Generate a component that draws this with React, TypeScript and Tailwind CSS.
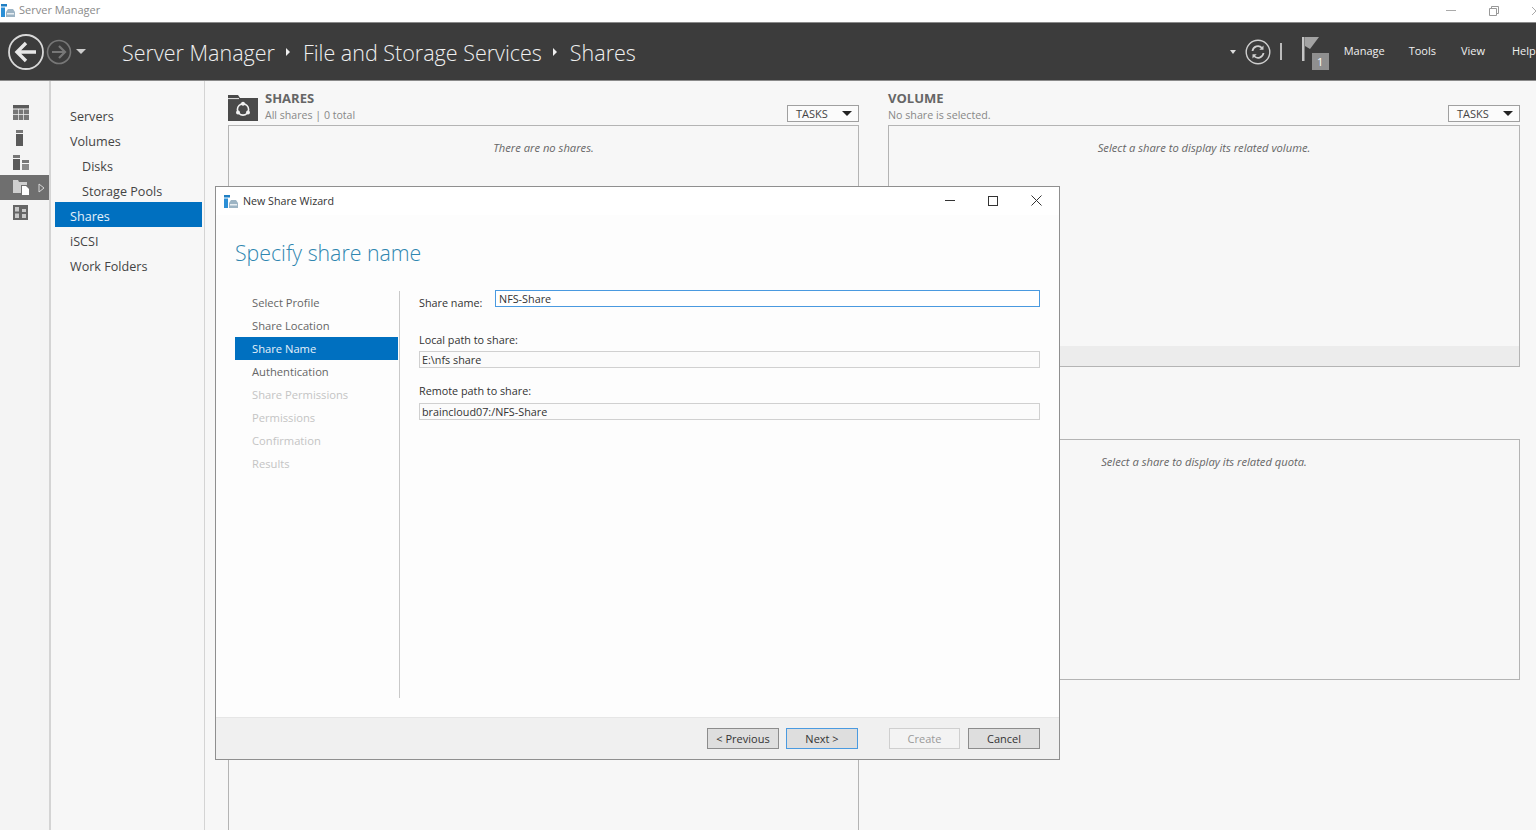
const font = "font-['Open_Sans','Noto_Sans',sans-serif]";

function AppIcon() {
  return (
    <svg width="15" height="15" viewBox="0 0 15 15">
      <rect x="0" y="1" width="6" height="2.5" fill="#1f7fc4" />
      <rect x="0" y="4.5" width="4" height="9.5" fill="#2b8fd6" />
      <path d="M5 9l2-3h5l2 3v5H5z" fill="#9db4c4" />
      <rect x="6" y="10" width="7" height="1.5" fill="#e8eef2" />
    </svg>
  );
}

function BackButton() {
  return (
    <svg width="38" height="38" viewBox="0 0 38 38">
      <circle cx="19" cy="19" r="17" fill="none" stroke="#d8d8d8" strokeWidth="1.8" />
      <path d="M29 19H11M19 10l-9 9 9 9" fill="none" stroke="#e8e8e8" strokeWidth="3.4" />
    </svg>
  );
}

function ForwardButton() {
  return (
    <svg width="26" height="26" viewBox="0 0 26 26">
      <circle cx="13" cy="13" r="11.5" fill="none" stroke="#777" strokeWidth="1.6" />
      <path d="M6 13h13M13 7l6 6-6 6" fill="none" stroke="#777" strokeWidth="2.2" />
    </svg>
  );
}

function RefreshIcon() {
  return (
    <svg width="26" height="26" viewBox="0 0 26 26">
      <circle cx="13" cy="13" r="11.8" fill="none" stroke="#cfcfcf" strokeWidth="1.4" />
      <path d="M7.5 12a5.5 5.5 0 0 1 9.5-3M18.5 14a5.5 5.5 0 0 1-9.5 3" fill="none" stroke="#cfcfcf" strokeWidth="1.8" />
      <path d="M18.5 6.5v4.2h-4.2zM7.5 19.5v-4.2h4.2z" fill="#cfcfcf" />
    </svg>
  );
}

function FlagIcon() {
  return (
    <div className="relative w-[27px] h-[33px]">
      <svg width="18" height="24" viewBox="0 0 18 24">
        <rect x="0" y="0" width="2.5" height="24" fill="#c4c4c4" />
        <path d="M3 0h14L8 12 3 9z" fill="#a3a3a3" />
      </svg>
      <div className="absolute right-0 bottom-0 w-[17px] h-[17px] bg-[#8f8f8f] text-white text-[11px] leading-[17px] text-center">1</div>
    </div>
  );
}

function RailIcon({ kind }: { kind: number }) {
  const c = kind === 3 ? '#e6e6e6' : '#5a5a5a';
  if (kind === 0)
    return (
      <svg width="16" height="15" viewBox="0 0 16 15">
        <path d="M0 0h16v3.5H0z" fill={c} />
        <path d="M0 4.5h5v4.5H0zM5.7 4.5h4.6v4.5H5.7zM11 4.5h5v4.5h-5zM0 9.8h5V15H0zM5.7 9.8h4.6V15H5.7zM11 9.8h5V15h-5z" fill="#777" />
      </svg>
    );
  if (kind === 1)
    return (
      <svg width="7" height="16" viewBox="0 0 7 16" className="ml-[3px]">
        <rect width="7" height="3" fill="#777" />
        <rect y="4" width="7" height="12" fill={c} />
      </svg>
    );
  if (kind === 2)
    return (
      <svg width="16" height="15" viewBox="0 0 16 15">
        <rect width="7" height="3" fill="#777" />
        <rect y="4" width="7" height="11" fill={c} />
        <rect x="9" y="5" width="7" height="3" fill="#777" />
        <rect x="9" y="9" width="7" height="6" fill="#8a8a8a" />
      </svg>
    );
  if (kind === 3)
    return (
      <svg width="16" height="15" viewBox="0 0 16 15">
        <path d="M0 0h5l1 2h8v3H8v8H0z" fill="#cfcfcf" />
        <path d="M9 6h4l3 3v6H9z" fill="#fff" />
      </svg>
    );
  return (
    <svg width="15" height="15" viewBox="0 0 15 15">
      <path d="M0 0h15v15H0z" fill="#666" />
      <path d="M2 2h4v4.5H2zM9 4h4v3H9zM2 8.5h4V13H2zM9 9h4v4H9z" fill="#c8c8c8" />
    </svg>
  );
}

function SharesIcon() {
  return (
    <svg width="30" height="26" viewBox="0 0 30 26">
      <path d="M0 0h10l2 3h18v23H0z" fill="#4a4a4a" />
      <path d="M0 3.6h11" stroke="#f7f7f7" strokeWidth="0.9" />
      <circle cx="15" cy="14.5" r="5.6" fill="none" stroke="#f2f2f2" strokeWidth="1.6" />
      <circle cx="15" cy="8.8" r="2" fill="#f2f2f2" />
      <circle cx="10" cy="17.5" r="2" fill="#f2f2f2" />
      <circle cx="20" cy="17.5" r="2" fill="#f2f2f2" />
    </svg>
  );
}

function TasksButton() {
  return (
    <div className="w-[72px] h-[17px] border border-[#a0a0a0] bg-[#fbfbfb] flex items-center pl-[8px] pr-[6px] justify-between text-[11px] text-[#444]">
      <span className="pt-[2px]">TASKS</span>
      <span className="w-0 h-0 border-x-[5px] border-x-transparent border-t-[5px] border-t-[#222]" />
    </div>
  );
}

function EmptyText({ children }: { children: string }) {
  return <p className="pt-[13px] text-center italic text-[11.2px] leading-[18px] text-[#666]">{children}</p>;
}

function WizardButton({ label, variant, width }: { label: string; variant?: 'focus' | 'disabled'; width?: string }) {
  const look =
    variant === 'focus'
      ? 'border-[#4a9ae0] bg-[#dedede] text-[#333]'
      : variant === 'disabled'
        ? 'border-[#cfcfcf] bg-[#f3f3f3] text-[#9a9a9a]'
        : 'border-[#8c8c8c] bg-[#dedede] text-[#333]';
  return (
    <div className={`${width ?? 'w-[72px]'} h-[21px] pt-[2px] border flex items-center justify-center text-[11px] ${look}`}>{label}</div>
  );
}

const navItems = [
  { label: 'Servers' },
  { label: 'Volumes' },
  { label: 'Disks', sub: true },
  { label: 'Storage Pools', sub: true },
  { label: 'Shares', active: true },
  { label: 'iSCSI' },
  { label: 'Work Folders' },
];

const steps = [
  { label: 'Select Profile', tone: 'text-[#666]' },
  { label: 'Share Location', tone: 'text-[#666]' },
  { label: 'Share Name', tone: 'text-[#e6f1fa] bg-[#0070c0]' },
  { label: 'Authentication', tone: 'text-[#666]' },
  { label: 'Share Permissions', tone: 'text-[#c4c4c4]' },
  { label: 'Permissions', tone: 'text-[#c4c4c4]' },
  { label: 'Confirmation', tone: 'text-[#c4c4c4]' },
  { label: 'Results', tone: 'text-[#c4c4c4]' },
];

function Wizard() {
  return (
    <div className="absolute left-[215px] top-[186px] w-[845px] h-[574px] border border-[#8f8f8f] bg-[#fdfdfd] flex flex-col">
      <div className="h-[28px] shrink-0 bg-white flex items-center pl-[8px] text-[10.7px] text-[#333]">
        <AppIcon />
        <span className="ml-[4px]">New Share Wizard</span>
        <div className="ml-auto flex items-center mb-[1px]">
          <div className="w-[10px] h-[1px] bg-[#333] mr-[33px]" />
          <div className="w-[10px] h-[10px] border border-[#333] mr-[33px]" />
          <svg width="11" height="11" viewBox="0 0 11 11" className="mr-[17px]">
            <path d="M.5.5l10 10M10.5.5l-10 10" stroke="#333" strokeWidth="1" />
          </svg>
        </div>
      </div>
      <h1 className="h-[76px] shrink-0 pl-[19px] pt-[20px] text-[21.3px] leading-[36px] font-light text-[#2f86b0]">Specify share name</h1>
      <div className="flex-1 flex pl-[19px] pb-[19px]">
        <div className="w-[164px] pr-[1px]">
          {steps.map((s) => (
            <div key={s.label} className={`h-[23px] pl-[17px] pt-[2px] flex items-center text-[11.2px] ${s.tone}`}>
              {s.label}
            </div>
          ))}
        </div>
        <div className="w-px bg-[#c9c9c9]" />
        <div className="flex-1 pl-[19px] pr-[19px] text-[10.8px] text-[#333]">
          <div className="flex h-[17px] mt-[-1px]">
            <span className="w-[76px] pt-[4px] leading-[17px]">Share name:</span>
            <div className="flex-1 border border-[#4a9ae0] bg-white pl-[3px] leading-[15px]">NFS-Share</div>
          </div>
          <p className="mt-[25px] leading-[16px]">Local path to share:</p>
          <div className="mt-[3px] h-[17px] border border-[#d0d0d0] bg-[#fbfbfb] pl-[2px] leading-[16px]">E:\nfs share</div>
          <p className="mt-[15px] leading-[16px]">Remote path to share:</p>
          <div className="mt-[4px] h-[17px] border border-[#d0d0d0] bg-[#fbfbfb] pl-[2px] leading-[16px]">braincloud07:/NFS-Share</div>
        </div>
      </div>
      <div className="h-[42px] shrink-0 bg-[#f0f0f0] border-t border-[#e6e6e6] flex items-center pr-[19px] justify-end">
        <WizardButton label="< Previous" />
        <div className="ml-[7px]"><WizardButton label="Next >" variant="focus" /></div>
        <div className="ml-[31px]"><WizardButton label="Create" variant="disabled" width="w-[71px]" /></div>
        <div className="ml-[8px]"><WizardButton label="Cancel" /></div>
      </div>
    </div>
  );
}

export default function App() {
  return (
    <div className={`relative h-[830px] w-[1536px] overflow-hidden bg-[#f7f7f7] flex flex-col ${font}`}>
      {/* window title */}
      <div className="h-[22px] shrink-0 bg-white flex items-center pl-[1px] pb-[1px] text-[11px] text-[#8a8a8a]">
        <AppIcon />
        <span className="ml-[3px]">Server Manager</span>
        <div className="ml-auto flex items-center">
          <div className="w-[10px] h-px bg-[#aaa] mr-[33px]" />
          <svg width="10" height="10" viewBox="0 0 10 10" className="mr-[33px]">
            <path d="M.5 2.5h7v7h-7zM2.5 2.5v-2h7v7h-2" fill="none" stroke="#999" />
          </svg>
          <svg width="4" height="10" viewBox="0 0 4 10">
            <path d="M0 1l8 8M8 1L0 9" stroke="#aaa" />
          </svg>
        </div>
      </div>

      {/* breadcrumb bar */}
      <div className="h-[59px] shrink-0 bg-[#3c3c3c] border-t border-b border-[#8a8a8a] flex items-center text-[#f0f0f0]">
        <div className="ml-[7px]"><BackButton /></div>
        <div className="ml-[1px]"><ForwardButton /></div>
        <span className="ml-[4px] w-0 h-0 border-x-[5px] border-x-transparent border-t-[5px] border-t-[#ccc]" />
        <span className="ml-[36px] pt-[3px] text-[21.5px] font-light">Server Manager</span>
        <span className="ml-[11px] w-0 h-0 border-y-[4px] border-y-transparent border-l-[4px] border-l-[#f0f0f0]" />
        <span className="ml-[13px] pt-[3px] text-[21.5px] font-light">File and Storage Services</span>
        <span className="ml-[11px] w-0 h-0 border-y-[4px] border-y-transparent border-l-[4px] border-l-[#f0f0f0]" />
        <span className="ml-[13px] pt-[3px] text-[21.5px] font-light">Shares</span>
        <div className="ml-auto flex items-center text-[11px]">
          <span className="w-0 h-0 border-x-[3.5px] border-x-transparent border-t-[4px] border-t-[#ddd]" />
          <div className="ml-[9px]"><RefreshIcon /></div>
          <div className="ml-[9px] w-[2px] h-[17px] bg-[#bbb]" />
          <div className="ml-[20px] mt-[4px]"><FlagIcon /></div>
          <span className="ml-[15px]">Manage</span>
          <span className="ml-[24px]">Tools</span>
          <span className="ml-[25px]">View</span>
          <span className="ml-[27px] w-[24px] overflow-hidden">Help</span>
        </div>
      </div>

      <div className="flex-1 flex min-h-0">
        {/* icon rail */}
        <div className="w-[51px] shrink-0 bg-[#f4f4f4] border-r-[2px] border-[#d4d4d4] pt-[19px]">
          {[0, 1, 2, 3, 4].map((k) => (
            <div key={k} className={`h-[25px] flex items-center pl-[13px] relative ${k === 3 ? 'bg-[#6f6f6f]' : ''}`}>
              <RailIcon kind={k} />
              {k === 3 && (
                <svg width="7" height="10" viewBox="0 0 7 10" className="absolute left-[38px]">
                  <path d="M1 1l5 4-5 4z" fill="none" stroke="#d8d8d8" />
                </svg>
              )}
            </div>
          ))}
        </div>

        {/* section nav */}
        <div className="w-[154px] shrink-0 border-r border-[#d4d4d4] pt-[21px] pl-[4px] pr-[2px]">
          {navItems.map((n) => (
            <div
              key={n.label}
              className={`h-[25px] pt-[5px] flex items-center text-[12.6px] ${n.sub ? 'pl-[27px]' : 'pl-[15px]'} ${n.active ? 'bg-[#0070c0] text-[#e6f1fa]' : 'text-[#444]'}`}
            >
              {n.label}
            </div>
          ))}
        </div>

        {/* content panes */}
        <div className="flex-1 flex pl-[23px] pr-[16px] gap-[29px]">
          <div className="w-[631px] flex flex-col">
            <div className="h-[44px] shrink-0 flex items-end pb-[2px]">
              <div className="mb-[2px]"><SharesIcon /></div>
              <div className="ml-[7px]">
                <div className="text-[13px] leading-[17px] font-bold text-[#666]">SHARES</div>
                <div className="text-[10.6px] leading-[16px] text-[#888]">All shares | 0 total</div>
              </div>
              <div className="ml-auto mb-[1px]"><TasksButton /></div>
            </div>
            <div className="flex-1 border-[1.5px] border-[#b4b4b4] border-b-0">
              <EmptyText>There are no shares.</EmptyText>
            </div>
          </div>

          <div className="w-[632px] flex flex-col">
            <div className="h-[44px] shrink-0 flex items-end pb-[2px]">
              <div>
                <div className="text-[13px] leading-[17px] font-bold text-[#666]">VOLUME</div>
                <div className="text-[10.7px] leading-[16px] text-[#888]">No share is selected.</div>
              </div>
              <div className="ml-auto mb-[1px]"><TasksButton /></div>
            </div>
            <div className="h-[242px] shrink-0 border-[1.5px] border-[#b4b4b4] flex flex-col">
              <div className="flex-1"><EmptyText>Select a share to display its related volume.</EmptyText></div>
              <div className="h-[20px] bg-[#ececec]" />
            </div>
            <div className="h-[72px] shrink-0" />
            <div className="h-[241px] shrink-0 border-[1.5px] border-[#b4b4b4]">
              <EmptyText>Select a share to display its related quota.</EmptyText>
            </div>
          </div>
        </div>
      </div>

      <Wizard />
    </div>
  );
}
